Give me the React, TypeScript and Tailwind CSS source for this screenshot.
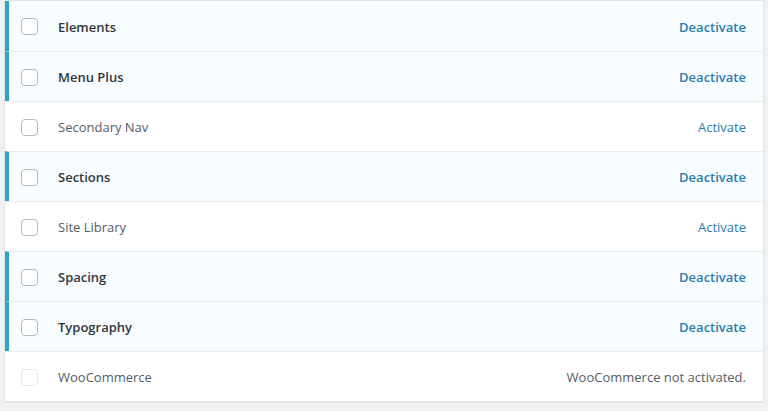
import React from "react";

type Row = { name: string; active: boolean; action: string; disabled?: boolean };

const rows: Row[] = [
  { name: "Elements", active: true, action: "Deactivate" },
  { name: "Menu Plus", active: true, action: "Deactivate" },
  { name: "Secondary Nav", active: false, action: "Activate" },
  { name: "Sections", active: true, action: "Deactivate" },
  { name: "Site Library", active: false, action: "Activate" },
  { name: "Spacing", active: true, action: "Deactivate" },
  { name: "Typography", active: true, action: "Deactivate" },
  { name: "WooCommerce", active: false, action: "WooCommerce not activated.", disabled: true },
];

export default function App() {
  return (
    <div
      className="w-[768px] h-[411px] bg-[#f1f1f1] overflow-hidden"
      style={{ fontFamily: '"Open Sans", "Noto Sans", sans-serif' }}
    >
      <div className="ml-[4px] w-[760px] bg-white border border-[#e2e4e7] shadow-[0_1px_1px_rgba(0,0,0,0.04)]">
        {rows.map((r, i) => (
          <div
            key={r.name}
            className={
              "flex items-center h-[50px] text-[13px] pt-px " +
              (i > 0 ? "border-t border-[#e8ecef] " : "") +
              (r.active ? "bg-[#f7fcfe] border-l-4 border-l-[#2ea2cc] pl-[12px]" : "bg-white pl-[16px]")
            }
          >
            <span
              className={
                "w-[17px] h-[17px] rounded-[4px] border bg-white shrink-0 " +
                (r.disabled ? "border-[#e6e8ea]" : "border-[#b4b9be]")
              }
            />
            <span
              className={
                "ml-[20px] mt-[2px] flex-1 " +
                (r.active ? "font-semibold text-[#32373c]" : "text-[#555d66]")
              }
            >
              {r.name}
            </span>
            <span
              className={
                "pr-[17px] mt-[2px] " +
                (r.disabled
                  ? "text-[#555d66]"
                  : r.active
                  ? "font-semibold text-[#2a7bb0]"
                  : "text-[#2a7bb0]")
              }
            >
              {r.action}
            </span>
          </div>
        ))}
      </div>
    </div>
  );
}
